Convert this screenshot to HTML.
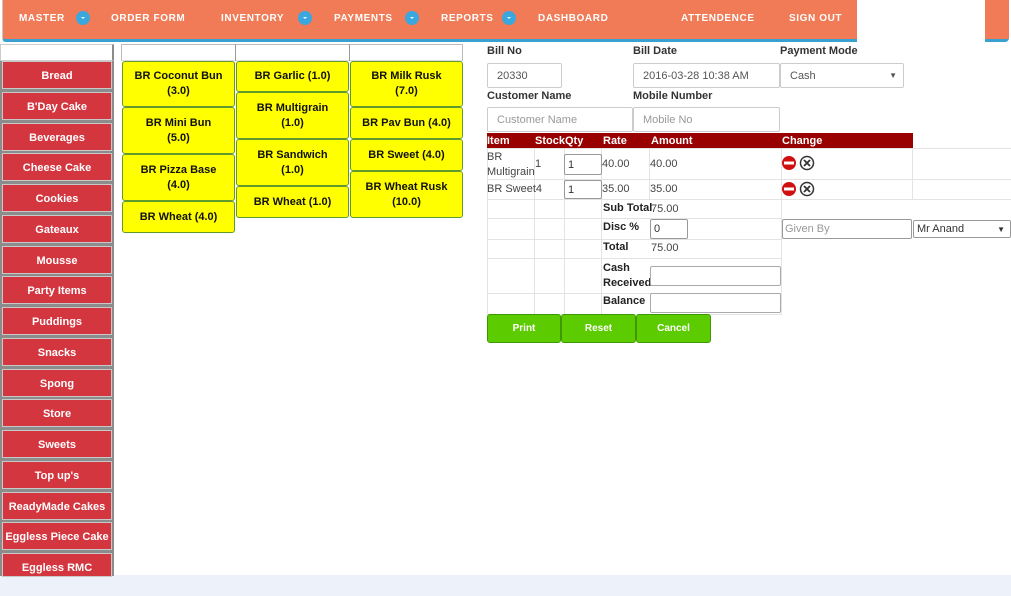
<!DOCTYPE html>
<html><head><style>
*{box-sizing:border-box;margin:0;padding:0}
body{width:1011px;height:596px;background:#fff;font-family:"Liberation Sans",Arial,sans-serif;position:relative;overflow:hidden}
.a{position:absolute}
#nav{left:2px;top:0;width:1007px;height:42px;background:#f07b56;border-bottom:3px solid #3aa0cf;border-radius:0 0 4px 4px;border-left:1px solid #c9c9c9}
.ni{position:absolute;top:13px;color:#fff;font-weight:bold;font-size:10px;letter-spacing:.6px}
.dd{position:absolute;top:11px;width:14px;height:14px;border-radius:50%;background:#3ba7df}
.dd:after{content:"";position:absolute;left:5px;top:6px;border-left:2px solid transparent;border-right:2px solid transparent;border-top:2px solid #fff}
.side{left:0;top:44px;width:114px;height:532px;background:#8c8c8c}
.sb{position:absolute;left:2px;width:110px;height:28px;background:#d3363f;color:#fff;font-weight:bold;font-size:11px;text-align:center;line-height:28px;border:1px solid #c8c8c8}
.y{position:absolute;background:#ffff00;border:1px solid #5f9a2a;border-radius:3px;font-weight:bold;font-size:11px;text-align:center;color:#111;display:flex;align-items:center;justify-content:center;line-height:15px}
.lbl{position:absolute;font-size:11px;font-weight:bold;color:#333}
.inp{position:absolute;border:1px solid #ccc;border-radius:2px;font-size:11px;color:#555;padding-left:9px;display:flex;align-items:center;background:#fff}
.ph{color:#999}
.c{position:absolute;font-size:11px;color:#444}
.b{font-weight:bold;color:#222}
.hl{position:absolute;background:#e3e3e3}
.btn{position:absolute;top:314px;height:29px;background:#5ccc00;border:1px solid #3c9a00;border-radius:3px;color:#fff;font-weight:bold;font-size:10px;text-align:center;line-height:27px}
</style></head><body>
<div class="a" style="left:0;top:575px;width:1011px;height:21px;background:#edf1f9"></div>
<div id="nav" class="a">
<span class="ni" style="left:16px">MASTER</span><span class="dd" style="left:73px"></span>
<span class="ni" style="left:108px">ORDER FORM</span>
<span class="ni" style="left:218px">INVENTORY</span><span class="dd" style="left:295px"></span>
<span class="ni" style="left:331px">PAYMENTS</span><span class="dd" style="left:402px"></span>
<span class="ni" style="left:438px">REPORTS</span><span class="dd" style="left:499px"></span>
<span class="ni" style="left:535px">DASHBOARD</span>
<span class="ni" style="left:678px">ATTENDENCE</span>
<span class="ni" style="left:786px">SIGN OUT</span>
</div>
<div class="a" style="left:857px;top:0;width:128px;height:46px;background:#fff"></div>
<div class="a side">
<div class="a" style="left:0;top:0;width:114px;height:17px;background:#fff;border:1px solid #ccc;border-right:2px solid #8c8c8c"></div>
<div class="sb" style="top:17px">Bread</div>
<div class="sb" style="top:48px">B'Day Cake</div>
<div class="sb" style="top:79px">Beverages</div>
<div class="sb" style="top:109px">Cheese Cake</div>
<div class="sb" style="top:140px">Cookies</div>
<div class="sb" style="top:171px">Gateaux</div>
<div class="sb" style="top:202px">Mousse</div>
<div class="sb" style="top:232px">Party Items</div>
<div class="sb" style="top:263px">Puddings</div>
<div class="sb" style="top:294px">Snacks</div>
<div class="sb" style="top:325px">Spong</div>
<div class="sb" style="top:355px">Store</div>
<div class="sb" style="top:386px">Sweets</div>
<div class="sb" style="top:417px">Top up's</div>
<div class="sb" style="top:448px">ReadyMade Cakes</div>
<div class="sb" style="top:478px">Eggless Piece Cake</div>
<div class="sb" style="top:509px;height:24px">Eggless RMC</div>
</div>
<div class="a" style="left:121px;top:44px;width:342px;height:17px;border:1px solid #bbb;border-bottom:1px solid #ddd"></div>
<div class="a" style="left:235px;top:44px;width:1px;height:17px;background:#999"></div>
<div class="a" style="left:349px;top:44px;width:1px;height:17px;background:#999"></div>
<div class="y" style="left:122px;top:61px;width:113px;height:46px">BR Coconut Bun<br>(3.0)</div>
<div class="y" style="left:122px;top:107px;width:113px;height:47px">BR Mini Bun<br>(5.0)</div>
<div class="y" style="left:122px;top:154px;width:113px;height:47px">BR Pizza Base<br>(4.0)</div>
<div class="y" style="left:122px;top:201px;width:113px;height:32px">BR Wheat (4.0)</div>
<div class="y" style="left:236px;top:61px;width:113px;height:31px">BR Garlic (1.0)</div>
<div class="y" style="left:236px;top:92px;width:113px;height:47px">BR Multigrain<br>(1.0)</div>
<div class="y" style="left:236px;top:139px;width:113px;height:47px">BR Sandwich<br>(1.0)</div>
<div class="y" style="left:236px;top:186px;width:113px;height:32px">BR Wheat (1.0)</div>
<div class="y" style="left:350px;top:61px;width:113px;height:46px">BR Milk Rusk<br>(7.0)</div>
<div class="y" style="left:350px;top:107px;width:113px;height:32px">BR Pav Bun (4.0)</div>
<div class="y" style="left:350px;top:139px;width:113px;height:32px">BR Sweet (4.0)</div>
<div class="y" style="left:350px;top:171px;width:113px;height:47px">BR Wheat Rusk<br>(10.0)</div>

<div class="lbl" style="left:487px;top:45px">Bill No</div>
<div class="lbl" style="left:633px;top:45px">Bill Date</div>
<div class="lbl" style="left:780px;top:45px">Payment Mode</div>
<div class="inp" style="left:487px;top:63px;width:75px;height:25px">20330</div>
<div class="inp" style="left:633px;top:63px;width:147px;height:25px">2016-03-28 10:38 AM</div>
<div class="inp" style="left:780px;top:63px;width:124px;height:25px">Cash<span style="position:absolute;right:6px;font-size:8px">▼</span></div>
<div class="lbl" style="left:487px;top:90px">Customer Name</div>
<div class="lbl" style="left:633px;top:90px">Mobile Number</div>
<div class="inp ph" style="left:487px;top:107px;width:146px;height:25px">Customer Name</div>
<div class="inp ph" style="left:633px;top:107px;width:147px;height:25px">Mobile No</div>

<div class="a" style="left:487px;top:133px;width:426px;height:15px;background:#990000"></div>
<div class="c b" style="left:487px;top:135px;color:#fff">Item</div>
<div class="c b" style="left:535px;top:135px;color:#fff">Stock</div>
<div class="c b" style="left:565px;top:135px;color:#fff">Qty</div>
<div class="c b" style="left:603px;top:135px;color:#fff">Rate</div>
<div class="c b" style="left:651px;top:135px;color:#fff">Amount</div>
<div class="c b" style="left:782px;top:135px;color:#fff">Change</div>
<div class="hl" style="left:487px;top:148px;width:524px;height:1px"></div>
<div class="hl" style="left:487px;top:179px;width:524px;height:1px"></div>
<div class="hl" style="left:487px;top:199px;width:524px;height:1px"></div>
<div class="hl" style="left:487px;top:218px;width:295px;height:1px"></div>
<div class="hl" style="left:487px;top:239px;width:295px;height:1px"></div>
<div class="hl" style="left:487px;top:258px;width:295px;height:1px"></div>
<div class="hl" style="left:487px;top:293px;width:295px;height:1px"></div>
<div class="hl" style="left:487px;top:314px;width:295px;height:1px"></div>
<div class="hl" style="left:487px;top:148px;width:1px;height:166px"></div>
<div class="hl" style="left:534px;top:148px;width:1px;height:166px"></div>
<div class="hl" style="left:564px;top:148px;width:1px;height:166px"></div>
<div class="hl" style="left:601px;top:148px;width:1px;height:166px"></div>
<div class="hl" style="left:649px;top:148px;width:1px;height:51px"></div>
<div class="hl" style="left:781px;top:148px;width:1px;height:166px"></div>
<div class="hl" style="left:912px;top:148px;width:1px;height:51px"></div>
<div class="c" style="left:487px;top:150px;line-height:15px">BR<br>Multigrain</div>
<div class="c" style="left:535px;top:158px">1</div>
<div class="inp" style="left:564px;top:154px;width:38px;height:21px;padding-left:3px;border-color:#999;color:#333">1</div>
<div class="c" style="left:602px;top:158px">40.00</div>
<div class="c" style="left:650px;top:158px">40.00</div>
<div class="c" style="left:487px;top:183px">BR Sweet4</div>
<div class="inp" style="left:564px;top:180px;width:38px;height:19px;padding-left:3px;border-color:#999;color:#333">1</div>
<div class="c" style="left:602px;top:183px">35.00</div>
<div class="c" style="left:650px;top:183px">35.00</div>
<svg class="a" style="left:781px;top:155px" width="36" height="16"><circle cx="8" cy="8" r="7" fill="#d01010"/><rect x="3" y="6.5" width="10" height="3" fill="#fff"/><circle cx="26" cy="8" r="6.5" fill="none" stroke="#333" stroke-width="1.5"/><path d="M23 5l6 6M29 5l-6 6" stroke="#333" stroke-width="1.8"/></svg>
<svg class="a" style="left:781px;top:181px" width="36" height="16"><circle cx="8" cy="8" r="7" fill="#d01010"/><rect x="3" y="6.5" width="10" height="3" fill="#fff"/><circle cx="26" cy="8" r="6.5" fill="none" stroke="#333" stroke-width="1.5"/><path d="M23 5l6 6M29 5l-6 6" stroke="#333" stroke-width="1.8"/></svg>
<div class="c b" style="left:603px;top:202px">Sub Total</div><div class="c" style="left:651px;top:203px">75.00</div>
<div class="c b" style="left:603px;top:221px">Disc %</div>
<div class="inp" style="left:650px;top:219px;width:38px;height:20px;padding-left:3px;border-color:#999;color:#333">0</div>
<div class="inp ph" style="left:782px;top:219px;width:130px;height:20px;padding-left:2px;border-color:#999">Given By</div>
<div class="inp" style="left:913px;top:220px;width:98px;height:18px;padding-left:3px;border-color:#999;color:#333">Mr Anand<span style="position:absolute;right:5px;font-size:8px">▼</span></div>
<div class="c b" style="left:603px;top:241px">Total</div><div class="c" style="left:651px;top:242px">75.00</div>
<div class="c b" style="left:603px;top:261px;line-height:15px">Cash<br>Received</div>
<div class="inp" style="left:650px;top:266px;width:131px;height:20px;border-color:#aaa"></div>
<div class="c b" style="left:603px;top:295px">Balance</div>
<div class="inp" style="left:650px;top:293px;width:131px;height:20px;border-color:#aaa"></div>
<div class="btn" style="left:487px;width:74px">Print</div>
<div class="btn" style="left:561px;width:75px">Reset</div>
<div class="btn" style="left:636px;width:75px">Cancel</div>
</body></html>
